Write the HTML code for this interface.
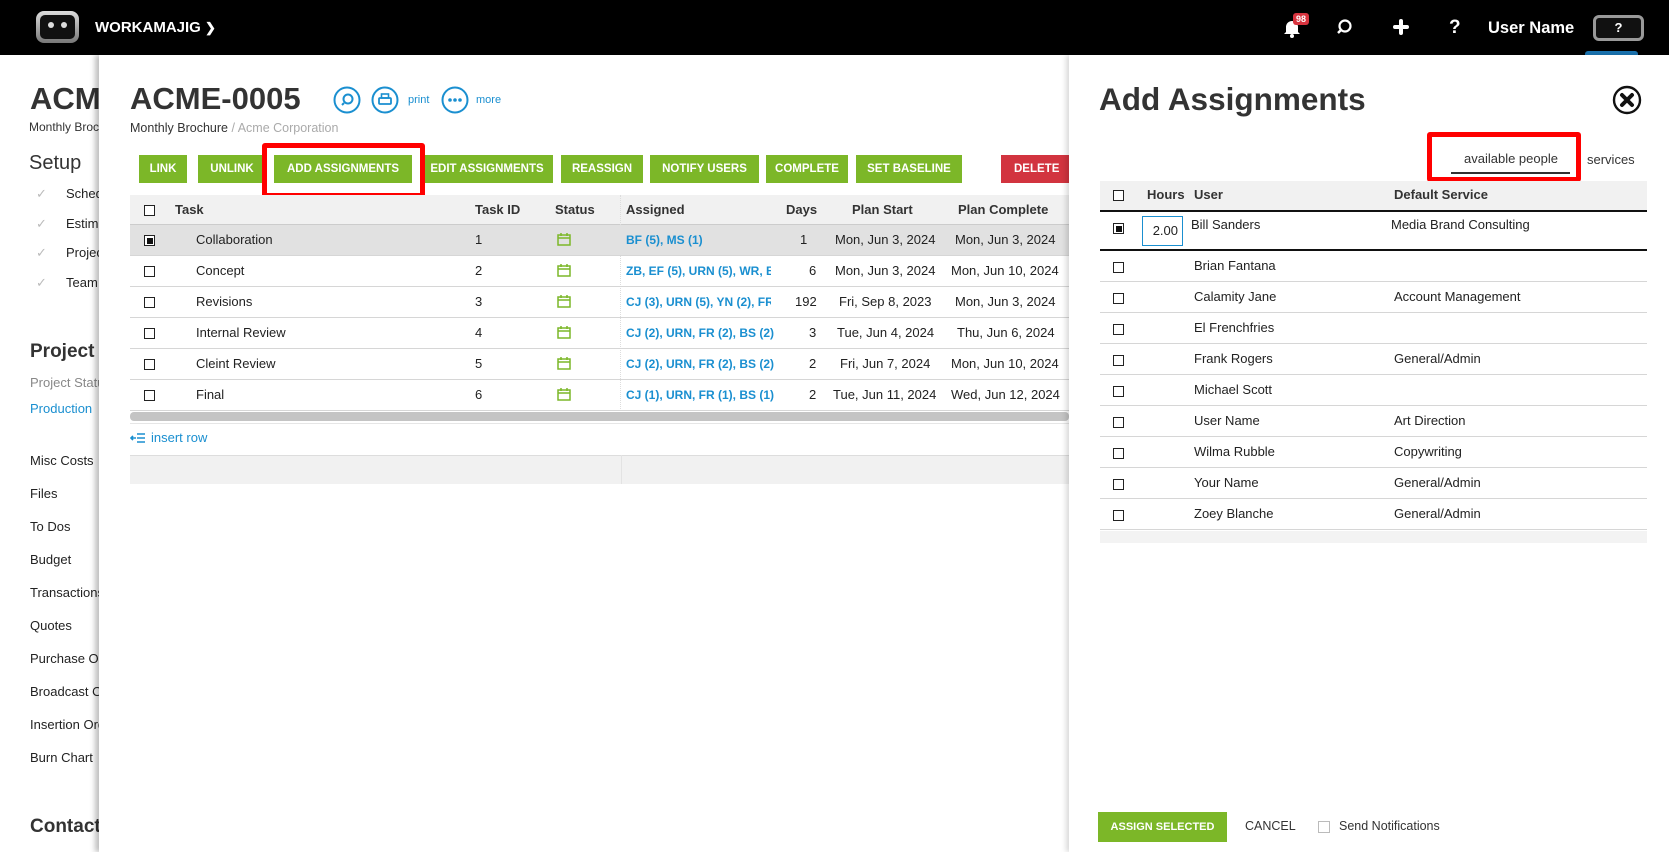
<!DOCTYPE html>
<html><head><meta charset="utf-8"><style>
*{margin:0;padding:0;box-sizing:border-box}
body{width:1669px;height:852px;position:relative;overflow:hidden;background:#fff;font-family:"Liberation Sans",sans-serif;color:#222}
.a{position:absolute;white-space:nowrap}
.t{position:absolute;white-space:nowrap;font-size:13px;line-height:16px}
.b{font-weight:bold}
.btn{position:absolute;top:155px;height:28px;background:#7cb728;color:#fff;font-weight:bold;font-size:11.5px;line-height:28px;text-align:center;overflow:hidden}
.cb{position:absolute;width:11px;height:11px;border:1.3px solid #222;background:#fff}
.cbf::after{content:"";position:absolute;left:1.5px;top:1.5px;width:6px;height:6px;background:#111}
.row{position:absolute;left:130px;width:939px;height:31px;border-bottom:1px solid #d6d6d6}
.rrow{position:absolute;left:1100px;width:547px;height:31px;border-bottom:1px solid #d6d6d6}
.blue{color:#1a8fd0;font-weight:bold;font-size:12px}
</style></head><body>
<div class="a" style="left:0;top:0;width:1669px;height:55px;background:#000"></div>
<div class="a" style="left:36px;top:11px;width:43px;height:32px;border-radius:8px;background:linear-gradient(#ddd,#777);"></div>
<div class="a" style="left:40px;top:15px;width:35px;height:24px;border-radius:5px;background:#111"></div>
<div class="a" style="left:48px;top:22px;width:6px;height:6px;border-radius:3px;background:#ddd"></div>
<div class="a" style="left:61px;top:22px;width:6px;height:6px;border-radius:3px;background:#ddd"></div>
<div class="a b" style="left:95px;top:18px;color:#fff;font-size:15px;line-height:20px">WORKAMAJIG <span style="font-size:13px">&#10095;</span></div>
<svg class="a" style="left:1280px;top:16px" width="24" height="24" viewBox="0 0 24 24"><path d="M6 16 L6 11 A6 6 0 0 1 18 11 L18 16 L20 18 L4 18 Z" fill="#fff"/><circle cx="12" cy="20" r="2" fill="#fff"/></svg>
<div class="a b" style="left:1293px;top:13px;background:#d8343f;color:#fff;font-size:9px;line-height:12px;padding:0 3px;border-radius:3px">98</div>
<svg class="a" style="left:1334px;top:17px" width="20" height="20" viewBox="0 0 20 20"><circle cx="11" cy="9" r="5.5" fill="none" stroke="#fff" stroke-width="2.2"/><path d="M7 13 L4 16" stroke="#fff" stroke-width="2.5"/></svg>
<svg class="a" style="left:1393px;top:19px" width="16" height="16" viewBox="0 0 16 16"><path d="M8 2V14M2 8H14" stroke="#fff" stroke-width="4" stroke-linecap="round"/></svg>
<div class="a b" style="left:1449px;top:17px;color:#fff;font-size:19px;line-height:22px">?</div>
<div class="a b" style="left:1488px;top:17px;color:#fff;font-size:16.5px;line-height:22px">User Name</div>
<div class="a" style="left:1593px;top:15px;width:51px;height:26px;border:3px solid #999;border-radius:6px;background:#111;color:#fff;font-weight:bold;font-size:13px;line-height:20px;text-align:center">?</div>
<div class="a" style="left:1585px;top:51px;width:53px;height:4px;background:#1a73b0;border-radius:3px 3px 0 0"></div>

<div class="a b" style="left:30px;top:81px;font-size:31px;line-height:36px;color:#333">ACME</div>
<div class="t" style="left:29px;top:119px;font-size:12px;color:#333">Monthly Brochure</div>
<div class="a" style="left:29px;top:152px;font-size:20px;line-height:22px;color:#333">Setup</div>
<div class="t" style="left:36px;top:186px;color:#bbb">&#10003;</div><div class="t" style="left:66px;top:186px">Schedule</div>
<div class="t" style="left:36px;top:216px;color:#bbb">&#10003;</div><div class="t" style="left:66px;top:216px">Estimate</div>
<div class="t" style="left:36px;top:245px;color:#bbb">&#10003;</div><div class="t" style="left:66px;top:245px">Project</div>
<div class="t" style="left:36px;top:275px;color:#bbb">&#10003;</div><div class="t" style="left:66px;top:275px">Team</div>
<div class="a b" style="left:30px;top:341px;font-size:19px;line-height:22px;color:#333">Project Info</div>
<div class="t" style="left:30px;top:375px;color:#888">Project Status</div>
<div class="t" style="left:30px;top:401px;color:#1a8fd0">Production</div>
<div class="t" style="left:30px;top:453px">Misc Costs</div>
<div class="t" style="left:30px;top:486px">Files</div>
<div class="t" style="left:30px;top:519px">To Dos</div>
<div class="t" style="left:30px;top:552px">Budget</div>
<div class="t" style="left:30px;top:585px">Transactions</div>
<div class="t" style="left:30px;top:618px">Quotes</div>
<div class="t" style="left:30px;top:651px">Purchase Orders</div>
<div class="t" style="left:30px;top:684px">Broadcast Orders</div>
<div class="t" style="left:30px;top:717px">Insertion Orders</div>
<div class="t" style="left:30px;top:750px">Burn Chart</div>
<div class="a b" style="left:30px;top:816px;font-size:19px;line-height:22px;color:#333">Contacts</div>

<div class="a" style="left:99px;top:55px;width:970px;height:797px;background:#fff;box-shadow:-4px 0 5px rgba(0,0,0,.25)"></div>
<div class="a b" style="left:130px;top:81px;font-size:31px;line-height:36px;color:#333">ACME-0005</div>
<svg class="a" style="left:333px;top:86px" width="150" height="30" viewBox="0 0 150 30">
<circle cx="14" cy="14" r="12.5" fill="none" stroke="#1a8fd0" stroke-width="2"/><circle cx="15" cy="13" r="4.5" fill="none" stroke="#1a8fd0" stroke-width="2"/><path d="M11 17 L9 19" stroke="#1a8fd0" stroke-width="2"/>
<circle cx="52" cy="14" r="12.5" fill="none" stroke="#1a8fd0" stroke-width="2"/><rect x="46" y="12" width="12" height="6" rx="1" fill="none" stroke="#1a8fd0" stroke-width="1.8"/><rect x="48.5" y="8" width="7" height="4" fill="none" stroke="#1a8fd0" stroke-width="1.6"/>
<circle cx="122" cy="14" r="12.5" fill="none" stroke="#1a8fd0" stroke-width="2"/><circle cx="117" cy="14" r="1.8" fill="#1a8fd0"/><circle cx="122" cy="14" r="1.8" fill="#1a8fd0"/><circle cx="127" cy="14" r="1.8" fill="#1a8fd0"/>
</svg>
<div class="a" style="left:408px;top:94px;font-size:11px;color:#1a8fd0">print</div>
<div class="a" style="left:476px;top:94px;font-size:11px;color:#1a8fd0">more</div>
<div class="t" style="left:130px;top:120px;font-size:12.5px;color:#333">Monthly Brochure <span style="color:#aaa">/ Acme Corporation</span></div>

<div class="btn" style="left:139px;width:48px">LINK</div>
<div class="btn" style="left:198px;width:68px">UNLINK</div>
<div class="btn" style="left:274px;width:138px">ADD ASSIGNMENTS</div>
<div class="btn" style="left:421px;width:132px">EDIT ASSIGNMENTS</div>
<div class="btn" style="left:561px;width:82px">REASSIGN</div>
<div class="btn" style="left:650px;width:109px">NOTIFY USERS</div>
<div class="btn" style="left:766px;width:82px">COMPLETE</div>
<div class="btn" style="left:856px;width:106px">SET BASELINE</div>
<div class="btn" style="left:1001px;width:68px;background:#d2343f;text-align:left;padding-left:13px">DELETE TASK</div>
<div class="a" style="left:262px;top:143px;width:163px;height:55px;border:5px solid #f00;border-radius:3px"></div>

<div class="a" style="left:130px;top:195px;width:939px;height:30px;background:#f1f1f1;border-bottom:1px solid #ccc"></div>
<div class="cb" style="left:144px;top:205px"></div>
<div class="t b" style="left:175px;top:202px;color:#333">Task</div>
<div class="t b" style="left:475px;top:202px;color:#333">Task ID</div>
<div class="t b" style="left:555px;top:202px;color:#333">Status</div>
<div class="t b" style="left:626px;top:202px;color:#333">Assigned</div>
<div class="t b" style="left:786px;top:202px;color:#333">Days</div>
<div class="t b" style="left:852px;top:202px;color:#333">Plan Start</div>
<div class="t b" style="left:958px;top:202px;color:#333">Plan Complete</div>
<div class="a" style="left:620px;top:195px;height:216px;border-left:1px dotted #ddd"></div>

<div class="row" style="top:225px;background:#e1e1e1"></div>
<div class="row" style="top:256px"></div>
<div class="row" style="top:287px"></div>
<div class="row" style="top:318px"></div>
<div class="row" style="top:349px"></div>
<div class="row" style="top:380px"></div>
<div class="a" style="left:130px;top:412px;width:939px;height:9px;background:#c4c4c4;border-radius:4px"></div>
<div class="a" style="left:130px;top:423px;width:939px;border-bottom:1px solid #e6e6e6"></div>

<div class="cb cbf" style="left:144px;top:235px"></div><div class="t" style="left:196px;top:232px">Collaboration</div><div class="t" style="left:475px;top:232px">1</div><div class="t blue" style="left:626px;top:232px">BF (5), MS (1)</div><div class="t" style="left:800px;top:232px">1</div><div class="t" style="left:835px;top:232px">Mon, Jun 3, 2024</div><div class="t" style="left:955px;top:232px">Mon, Jun 3, 2024</div>
<div class="cb" style="left:144px;top:266px"></div><div class="t" style="left:196px;top:263px">Concept</div><div class="t" style="left:475px;top:263px">2</div><div class="t blue" style="left:626px;top:263px;width:145px;overflow:hidden">ZB, EF (5), URN (5), WR, BS</div><div class="t" style="left:809px;top:263px">6</div><div class="t" style="left:835px;top:263px">Mon, Jun 3, 2024</div><div class="t" style="left:951px;top:263px">Mon, Jun 10, 2024</div>
<div class="cb" style="left:144px;top:297px"></div><div class="t" style="left:196px;top:294px">Revisions</div><div class="t" style="left:475px;top:294px">3</div><div class="t blue" style="left:626px;top:294px;width:145px;overflow:hidden">CJ (3), URN (5), YN (2), FR (</div><div class="t" style="left:795px;top:294px">192</div><div class="t" style="left:839px;top:294px">Fri, Sep 8, 2023</div><div class="t" style="left:955px;top:294px">Mon, Jun 3, 2024</div>
<div class="cb" style="left:144px;top:328px"></div><div class="t" style="left:196px;top:325px">Internal Review</div><div class="t" style="left:475px;top:325px">4</div><div class="t blue" style="left:626px;top:325px">CJ (2), URN, FR (2), BS (2)</div><div class="t" style="left:809px;top:325px">3</div><div class="t" style="left:837px;top:325px">Tue, Jun 4, 2024</div><div class="t" style="left:957px;top:325px">Thu, Jun 6, 2024</div>
<div class="cb" style="left:144px;top:359px"></div><div class="t" style="left:196px;top:356px">Cleint Review</div><div class="t" style="left:475px;top:356px">5</div><div class="t blue" style="left:626px;top:356px">CJ (2), URN, FR (2), BS (2)</div><div class="t" style="left:809px;top:356px">2</div><div class="t" style="left:840px;top:356px">Fri, Jun 7, 2024</div><div class="t" style="left:951px;top:356px">Mon, Jun 10, 2024</div>
<div class="cb" style="left:144px;top:390px"></div><div class="t" style="left:196px;top:387px">Final</div><div class="t" style="left:475px;top:387px">6</div><div class="t blue" style="left:626px;top:387px">CJ (1), URN, FR (1), BS (1)</div><div class="t" style="left:809px;top:387px">2</div><div class="t" style="left:833px;top:387px">Tue, Jun 11, 2024</div><div class="t" style="left:951px;top:387px">Wed, Jun 12, 2024</div>
<svg class="a" style="left:557px;top:232px" width="14" height="170" viewBox="0 0 14 170"><g fill="none" stroke="#7cb728" stroke-width="1.5">
<rect x="1" y="3" width="12" height="10"/><path d="M1 6H13M4 1V4M10 1V4"/>
<rect x="1" y="34" width="12" height="10"/><path d="M1 37H13M4 32V35M10 32V35"/>
<rect x="1" y="65" width="12" height="10"/><path d="M1 68H13M4 63V66M10 63V66"/>
<rect x="1" y="96" width="12" height="10"/><path d="M1 99H13M4 94V97M10 94V97"/>
<rect x="1" y="127" width="12" height="10"/><path d="M1 130H13M4 125V128M10 125V128"/>
<rect x="1" y="158" width="12" height="10"/><path d="M1 161H13M4 156V159M10 156V159"/></g></svg>
<svg class="a" style="left:130px;top:432px" width="16" height="12" viewBox="0 0 16 12"><path d="M1 6H6M3 4L1 6L3 8M7 2H15M7 6H15M7 10H15" stroke="#1a8fd0" stroke-width="1.6" fill="none"/></svg>
<div class="t" style="left:151px;top:430px;color:#1a8fd0">insert row</div>
<div class="a" style="left:130px;top:455px;width:939px;height:29px;background:#f1f1f1;border-top:1px solid #ddd"></div>
<div class="a" style="left:621px;top:455px;height:29px;border-left:1px solid #e3e3e3"></div>

<div class="a" style="left:1069px;top:55px;width:600px;height:797px;background:#fff;box-shadow:-3px 0 5px rgba(0,0,0,.15)"></div>
<div class="a b" style="left:1099px;top:81px;font-size:31.5px;line-height:36px;color:#333">Add Assignments</div>
<svg class="a" style="left:1612px;top:85px" width="30" height="30" viewBox="0 0 30 30"><circle cx="15" cy="15" r="13" fill="none" stroke="#111" stroke-width="2.4"/><path d="M10 10L20 20M20 10L10 20" stroke="#111" stroke-width="4" stroke-linecap="round"/></svg>
<div class="t" style="left:1464px;top:151px;color:#333">available people</div>
<div class="a" style="left:1451px;top:172px;width:119px;height:2px;background:#333"></div>
<div class="t" style="left:1587px;top:152px;color:#333">services</div>
<div class="a" style="left:1427px;top:132px;width:154px;height:50px;border:5px solid #f00;border-radius:3px"></div>

<div class="a" style="left:1100px;top:181px;width:547px;height:31px;background:#f1f1f1;border-bottom:2px solid #111"></div>
<div class="cb" style="left:1113px;top:190px"></div>
<div class="t b" style="left:1147px;top:187px;color:#333">Hours</div>
<div class="t b" style="left:1194px;top:187px;color:#333">User</div>
<div class="t b" style="left:1394px;top:187px;color:#333">Default Service</div>
<div class="a" style="left:1100px;top:212px;width:547px;height:39px;border-bottom:2px solid #111"></div>
<div class="cb cbf" style="left:1113px;top:223px"></div>
<div class="a" style="left:1142px;top:216px;width:41px;height:30px;border:1.5px solid #1a8fd0;font-size:13px;line-height:27px;text-align:right;padding-right:4px">2.00</div>
<div class="t" style="left:1191px;top:217px">Bill Sanders</div>
<div class="t" style="left:1391px;top:217px">Media Brand Consulting</div>

<div class="rrow" style="top:251px"></div><div class="cb" style="left:1113px;top:262px"></div><div class="t" style="left:1194px;top:258px">Brian Fantana</div>
<div class="rrow" style="top:282px"></div><div class="cb" style="left:1113px;top:293px"></div><div class="t" style="left:1194px;top:289px">Calamity Jane</div><div class="t" style="left:1394px;top:289px">Account Management</div>
<div class="rrow" style="top:313px"></div><div class="cb" style="left:1113px;top:324px"></div><div class="t" style="left:1194px;top:320px">El Frenchfries</div>
<div class="rrow" style="top:344px"></div><div class="cb" style="left:1113px;top:355px"></div><div class="t" style="left:1194px;top:351px">Frank Rogers</div><div class="t" style="left:1394px;top:351px">General/Admin</div>
<div class="rrow" style="top:375px"></div><div class="cb" style="left:1113px;top:386px"></div><div class="t" style="left:1194px;top:382px">Michael Scott</div>
<div class="rrow" style="top:406px"></div><div class="cb" style="left:1113px;top:417px"></div><div class="t" style="left:1194px;top:413px">User Name</div><div class="t" style="left:1394px;top:413px">Art Direction</div>
<div class="rrow" style="top:437px"></div><div class="cb" style="left:1113px;top:448px"></div><div class="t" style="left:1194px;top:444px">Wilma Rubble</div><div class="t" style="left:1394px;top:444px">Copywriting</div>
<div class="rrow" style="top:468px"></div><div class="cb" style="left:1113px;top:479px"></div><div class="t" style="left:1194px;top:475px">Your Name</div><div class="t" style="left:1394px;top:475px">General/Admin</div>
<div class="rrow" style="top:499px"></div><div class="cb" style="left:1113px;top:510px"></div><div class="t" style="left:1194px;top:506px">Zoey Blanche</div><div class="t" style="left:1394px;top:506px">General/Admin</div>
<div class="a" style="left:1100px;top:531px;width:547px;height:12px;background:#f3f3f3"></div>

<div class="a b" style="left:1098px;top:812px;width:129px;height:30px;background:#7cb728;color:#fff;font-size:11px;line-height:30px;text-align:center">ASSIGN SELECTED</div>
<div class="t" style="left:1245px;top:818px;font-size:12.5px;color:#333">CANCEL</div>
<div class="a" style="left:1318px;top:821px;width:12px;height:12px;border:1px solid #bbb"></div>
<div class="t" style="left:1339px;top:818px;font-size:12.5px;color:#333">Send Notifications</div>
</body></html>
